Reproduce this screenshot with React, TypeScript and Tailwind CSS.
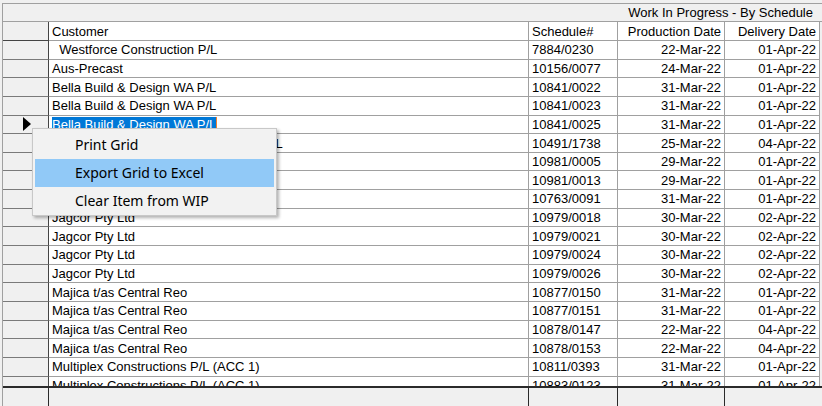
import { useState } from "react";

type Row = {
  customer: string;
  schedule: string;
  production: string;
  delivery: string;
};

const rows: Row[] = [
  { customer: "  Westforce Construction P/L", schedule: "7884/0230", production: "22-Mar-22", delivery: "01-Apr-22" },
  { customer: "Aus-Precast", schedule: "10156/0077", production: "24-Mar-22", delivery: "01-Apr-22" },
  { customer: "Bella Build & Design WA P/L", schedule: "10841/0022", production: "31-Mar-22", delivery: "01-Apr-22" },
  { customer: "Bella Build & Design WA P/L", schedule: "10841/0023", production: "31-Mar-22", delivery: "01-Apr-22" },
  { customer: "Bella Build & Design WA P/L", schedule: "10841/0025", production: "31-Mar-22", delivery: "01-Apr-22" },
  { customer: "Doric Contractors Constructions WA P/L", schedule: "10491/1738", production: "25-Mar-22", delivery: "04-Apr-22" },
  { customer: "Georgiou Group P/L", schedule: "10981/0005", production: "29-Mar-22", delivery: "01-Apr-22" },
  { customer: "Georgiou Group P/L", schedule: "10981/0013", production: "29-Mar-22", delivery: "01-Apr-22" },
  { customer: "Italia Stone Group", schedule: "10763/0091", production: "31-Mar-22", delivery: "01-Apr-22" },
  { customer: "Jagcor Pty Ltd", schedule: "10979/0018", production: "30-Mar-22", delivery: "02-Apr-22" },
  { customer: "Jagcor Pty Ltd", schedule: "10979/0021", production: "30-Mar-22", delivery: "02-Apr-22" },
  { customer: "Jagcor Pty Ltd", schedule: "10979/0024", production: "30-Mar-22", delivery: "02-Apr-22" },
  { customer: "Jagcor Pty Ltd", schedule: "10979/0026", production: "30-Mar-22", delivery: "02-Apr-22" },
  { customer: "Majica t/as Central Reo", schedule: "10877/0150", production: "31-Mar-22", delivery: "01-Apr-22" },
  { customer: "Majica t/as Central Reo", schedule: "10877/0151", production: "31-Mar-22", delivery: "01-Apr-22" },
  { customer: "Majica t/as Central Reo", schedule: "10878/0147", production: "22-Mar-22", delivery: "04-Apr-22" },
  { customer: "Majica t/as Central Reo", schedule: "10878/0153", production: "22-Mar-22", delivery: "04-Apr-22" },
  { customer: "Multiplex Constructions P/L (ACC 1)", schedule: "10811/0393", production: "31-Mar-22", delivery: "01-Apr-22" },
  { customer: "Multiplex Constructions P/L (ACC 1)", schedule: "10883/0123", production: "31-Mar-22", delivery: "01-Apr-22" },
];

const menuItems = ["Print Grid", "Export Grid to Excel", "Clear Item from WIP"];

const SELECTED = 4;

const App = () => {
  const [hover] = useState(1);

  return (
    <div className="relative w-[822px] h-[406px] overflow-hidden bg-[#f0f0f0] pt-[3px] pl-[2px] font-['Liberation_Sans',Arial,sans-serif] text-[13px] text-black leading-none">
      <div className="flex flex-col h-full border-l border-t border-[#a0a0a0]">
        {/* title */}
        <div className="flex items-center justify-end h-[18px] pr-[9px] border-b border-[#a0a0a0] shrink-0">
          Work In Progress - By Schedule
        </div>

        {/* column headers */}
        <div className="flex h-[19px] shrink-0">
          <div className="w-[46px] shrink-0 border-r border-b border-[#444] bg-[#f0f0f0]" />
          <div className="w-[480px] shrink-0 flex items-center pl-[3px] bg-white border-r border-b border-[#a0a0a0]">Customer</div>
          <div className="w-[89px] shrink-0 flex items-center pl-[3px] bg-white border-r border-b border-[#a0a0a0]">Schedule#</div>
          <div className="w-[107px] shrink-0 flex items-center justify-end pr-[3px] bg-white border-r border-b border-[#a0a0a0]">Production Date</div>
          <div className="w-[95px] shrink-0 flex items-center justify-end pr-[3px] bg-white border-r border-b border-[#a0a0a0]">Delivery Date</div>
        </div>

        {/* body */}
        <div className="flex-1 overflow-hidden">
          {rows.map((r, i) => (
            <div key={i} className="flex h-[18.65px]">
              <div className="w-[46px] shrink-0 flex items-center pl-[20px] border-r border-b border-r-[#444] border-b-[#7a7a7a] bg-[#f0f0f0]">
                {i === SELECTED && (
                  <svg width="8" height="14" viewBox="0 0 8 14">
                    <path d="M0 0 L8 7 L0 14 Z" fill="#000" />
                  </svg>
                )}
              </div>
              <div className="w-[480px] shrink-0 flex items-center pl-[3px] bg-white border-r border-b border-[#a0a0a0] whitespace-pre">
                {i === SELECTED ? (
                  <span className="bg-[#0078d7] text-white h-[15px] flex items-center border-r border-[#f08030]">{r.customer}</span>
                ) : (
                  r.customer
                )}
              </div>
              <div className="w-[89px] shrink-0 flex items-center pl-[3px] bg-white border-r border-b border-[#a0a0a0]">{r.schedule}</div>
              <div className="w-[107px] shrink-0 flex items-center justify-end pr-[3px] bg-white border-r border-b border-[#a0a0a0]">{r.production}</div>
              <div className="w-[95px] shrink-0 flex items-center justify-end pr-[3px] bg-white border-r border-b border-[#a0a0a0]">{r.delivery}</div>
            </div>
          ))}
        </div>

        {/* footer */}
        <div className="flex h-[20px] shrink-0 border-t-2 border-[#2a2a2a]">
          <div className="w-[46px] shrink-0 border-r border-[#2a2a2a] bg-[#f0f0f0]" />
          <div className="w-[480px] shrink-0 border-r border-[#2a2a2a] bg-[#f0f0f0]" />
          <div className="w-[89px] shrink-0 border-r border-[#2a2a2a] bg-[#f0f0f0]" />
          <div className="w-[107px] shrink-0 border-r border-[#2a2a2a] bg-[#f0f0f0]" />
          <div className="w-[95px] shrink-0 bg-[#f0f0f0]" />
        </div>
      </div>

      {/* context menu */}
      <div className="absolute left-[32px] top-[128px] w-[245px] h-[88px] bg-[#f2f2f2] border border-[#c8c8c8] shadow-[2px_2px_3px_rgba(0,0,0,0.3)] py-[2px] px-[2px] font-['Noto_Sans',sans-serif] text-[14px]">
        {menuItems.map((m, i) => (
          <div
            key={m}
            className={`h-[28px] flex items-center pl-[40px] ${i === hover ? "bg-[#91c9f7]" : ""}`}
          >
            {m}
          </div>
        ))}
      </div>
    </div>
  );
};

export default App;
